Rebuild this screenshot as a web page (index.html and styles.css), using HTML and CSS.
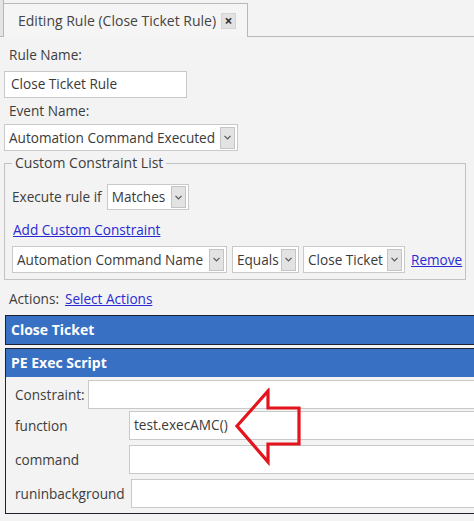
FILE: index.html
```html
<!DOCTYPE html>
<html lang="en">
<head>
    <meta charset="UTF-8">
    <meta name="viewport" content="width=device-width, initial-scale=1.0">
    <title>Editing Rule (Close Ticket Rule)</title>
    <link rel="stylesheet" href="styles.css">
</head>
<body>
    <div class="tabstrip">
        <div class="tab-stub"></div>
        <div class="tab">
            <span class="tab-title">Editing Rule (Close Ticket Rule)</span>
            <span class="tab-close">&times;</span>
        </div>
        <div class="tab-rest"></div>
    </div>

    <div class="editor">
        <div class="field-label">Rule Name:</div>
        <div class="textbox rule-name">Close Ticket Rule</div>

        <div class="field-label">Event Name:</div>
        <div class="combo event-name">
            <span class="combo-text">Automation Command Executed</span>
            <span class="combo-btn"><svg width="7" height="5" viewBox="0 0 7 5"><path d="M0.5 0.8 L3.5 3.8 L6.5 0.8" fill="none" stroke="#555" stroke-width="1.2"/></svg></span>
        </div>

        <fieldset class="constraints">
            <legend>Custom Constraint List</legend>
            <div class="exec-row">
                <span>Execute rule if</span>
                <div class="combo match-combo">
                    <span class="combo-text">Matches</span>
                    <span class="combo-btn"><svg width="7" height="5" viewBox="0 0 7 5"><path d="M0.5 0.8 L3.5 3.8 L6.5 0.8" fill="none" stroke="#555" stroke-width="1.2"/></svg></span>
                </div>
            </div>
            <div class="add-row"><a class="link" href="#">Add Custom Constraint</a></div>
            <div class="constraint-row">
                <div class="combo c-name">
                    <span class="combo-text">Automation Command Name</span>
                    <span class="combo-btn"><svg width="7" height="5" viewBox="0 0 7 5"><path d="M0.5 0.8 L3.5 3.8 L6.5 0.8" fill="none" stroke="#555" stroke-width="1.2"/></svg></span>
                </div>
                <div class="combo c-op">
                    <span class="combo-text">Equals</span>
                    <span class="combo-btn"><svg width="7" height="5" viewBox="0 0 7 5"><path d="M0.5 0.8 L3.5 3.8 L6.5 0.8" fill="none" stroke="#555" stroke-width="1.2"/></svg></span>
                </div>
                <div class="combo c-value">
                    <span class="combo-text">Close Ticket</span>
                    <span class="combo-btn"><svg width="7" height="5" viewBox="0 0 7 5"><path d="M0.5 0.8 L3.5 3.8 L6.5 0.8" fill="none" stroke="#555" stroke-width="1.2"/></svg></span>
                </div>
                <a class="link remove-link" href="#">Remove</a>
            </div>
        </fieldset>

        <div class="actions-row">
            <span>Actions:</span>
            <a class="link" href="#">Select Actions</a>
        </div>

        <div class="actions">
            <div class="action-bar">Close Ticket</div>
            <div class="action-panel">
                <div class="action-bar panel-head">PE Exec Script</div>
                <div class="param-row first">
                    <span class="param-label">Constraint:</span>
                    <div class="textbox param-input"></div>
                </div>
                <div class="param-grid">
                    <span class="param-label">function</span>
                    <div class="textbox param-input">test.execAMC()</div>
                    <span class="param-label">command</span>
                    <div class="textbox param-input"></div>
                    <span class="param-label">runinbackground</span>
                    <div class="textbox param-input runin"></div>
                </div>
                <svg class="callout" width="70" height="80" viewBox="0 0 70 80">
                    <polygon points="2,38 33,3 33,20 64,20 64,56 33,56 33,74" fill="none" stroke="#e3141d" stroke-width="3.2" stroke-linejoin="miter"/>
                </svg>
            </div>
        </div>
    </div>
</body>
</html>
```

FILE: styles.css
```css
html, body {
    margin: 0;
    padding: 0;
}
body {
    font-family: "Open Sans", "Noto Sans", sans-serif;
    font-size: 13.6px;
    line-height: 20px;
    color: #3d3d3d;
    background-color: #f3f3f3;
    width: 474px;
    height: 521px;
    overflow: hidden;
}

/* tab strip */
.tabstrip {
    display: flex;
    align-items: flex-end;
    height: 37px;
}
.tab-stub {
    width: 4px;
    height: 37px;
    box-sizing: border-box;
    background-color: #e4e4e4;
    border-right: 1px solid #b8b8b8;
    border-bottom: 1px solid #b8b8b8;
}
.tab {
    display: flex;
    align-items: center;
    height: 34px;
    box-sizing: border-box;
    padding: 0 11px 0 14px;
    border: 1px solid #b8b8b8;
    border-left: none;
    border-bottom: none;
    background-color: #f5f5f5;
    font-size: 14px;
}
.tab-title {
    color: #444;
}
.tab-close {
    display: inline-flex;
    align-items: center;
    justify-content: center;
    width: 15px;
    height: 16px;
    margin-left: 5px;
    background-color: #e2e2e2;
    border: 1px solid #d4d4d4;
    box-sizing: border-box;
    font-weight: bold;
    font-size: 14px;
    line-height: 1;
    color: #333;
}
.tab-rest {
    flex: 1;
    height: 37px;
    box-sizing: border-box;
    border-bottom: 1px solid #b8b8b8;
}

/* editor */
.editor {
    padding: 0 0 0 4px;
}
.field-label {
    padding-left: 5px;
    margin-top: 8px;
}
.field-label + .textbox {
    margin-top: 6px;
}
.rule-name + .field-label {
    margin-top: 3px;
}
.textbox {
    height: 27px;
    box-sizing: border-box;
    background-color: #fff;
    border: 1px solid #c9c9c9;
    padding: 2px 6px;
    color: #3a3a3a;
}
.rule-name {
    width: 183px;
}

.combo {
    display: flex;
    flex-shrink: 0;
    align-items: center;
    height: 27px;
    box-sizing: border-box;
    background-color: #fff;
    border: 1px solid #c9c9c9;
    padding: 0 2px 0 4px;
}
.combo-text {
    flex: 1;
    white-space: nowrap;
    color: #3a3a3a;
}
.combo-btn {
    display: flex;
    align-items: center;
    justify-content: center;
    width: 13px;
    height: 20px;
    background-color: #e3e3e3;
    border: 1px solid #c4c4c4;
}
.event-name {
    width: 234px;
    margin-top: 3px;
}

/* constraints */
.constraints {
    margin: 2px 0 0 0;
    width: 462px;
    min-width: 0;
    box-sizing: border-box;
    padding: 0 7px 6px 7px;
    border: 1px solid #c2c2c2;
}
.constraints legend {
    padding: 0 3px;
    font-size: 14px;
}
.exec-row {
    display: flex;
    align-items: center;
    gap: 5px;
    margin-top: 11px;
}
.match-combo {
    width: 82px;
    height: 26px;
}
.add-row {
    margin-top: 10px;
    padding-left: 1px;
}
.link {
    color: #2a2ad4;
    text-decoration: underline;
}
.constraint-row {
    display: flex;
    align-items: center;
    margin-top: 6px;
}
.c-name {
    width: 215px;
}
.c-op {
    width: 67px;
    margin-left: 5px;
}
.c-value {
    width: 102px;
    margin-left: 4px;
}
.remove-link {
    margin-left: 6px;
    white-space: nowrap;
}

.actions-row {
    display: flex;
    gap: 6px;
    padding-left: 5px;
    margin-top: 9px;
}

/* action list, runs on past the right edge of the window */
.actions {
    margin: 6px 0 0 1px;
}
.action-bar {
    height: 30px;
    box-sizing: border-box;
    border: 1px solid #1b2233;
    border-right: none;
    background-color: #3870c3;
    color: #fff;
    font-weight: bold;
    font-size: 14px;
    line-height: 27px;
    padding-left: 5px;
}
.action-panel {
    position: relative;
    margin-top: 3px;
    border: 1px solid #1e2230;
    border-right: none;
    padding-bottom: 5px;
}
.panel-head {
    border: none;
    height: 28px;
    line-height: 27px;
    padding-left: 5px;
}
.param-row {
    display: flex;
    align-items: center;
    gap: 3px;
    padding-left: 9px;
    margin-top: 3px;
}
.param-input {
    flex: 1;
    height: 29px;
    padding: 3px 4px;
    border-right: none;
}
.param-grid {
    display: grid;
    grid-template-columns: 114px 1fr;
    row-gap: 5px;
    align-items: center;
    padding-left: 9px;
    margin-top: 2px;
}
.param-grid .runin {
    margin-left: 2px;
}
.callout {
    position: absolute;
    left: 229px;
    top: 39px;
}
```
